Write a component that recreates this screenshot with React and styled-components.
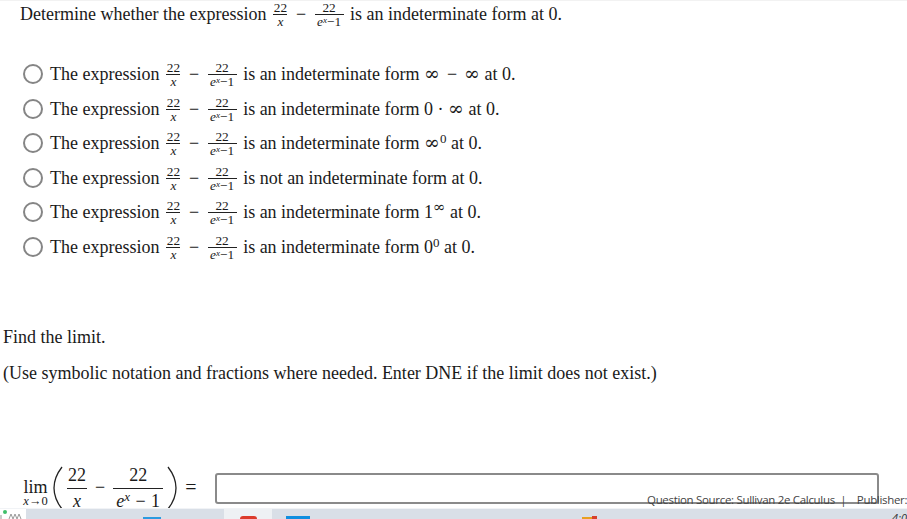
import styled, { createGlobalStyle } from "styled-components";

const GlobalStyle = createGlobalStyle`
  html, body {
    margin: 0;
    padding: 0;
    background: #fff;
  }
`;

const Page = styled.div`
  position: relative;
  box-sizing: border-box;
  width: 907px;
  height: 519px;
  overflow: hidden;
  display: flex;
  flex-direction: column;
  background: #fff;
  border-top: 1px solid #f2f2f2;
  color: #1a1a1a;
  font-family: "Liberation Serif", "Times New Roman", serif;
  font-size: 18px;
`;

const Question = styled.div`
  display: flex;
  align-items: center;
  height: 27px;
  padding-left: 20px;
  white-space: pre;
`;

const Options = styled.div`
  display: flex;
  flex-direction: column;
  margin-top: 29px;
  padding-left: 23px;
`;

const Option = styled.label`
  display: flex;
  align-items: center;
  height: 34px;
  white-space: pre;
  &:nth-child(even) {
    margin-top: 1px;
  }
`;

const Tail = styled.span`
  display: block;
  white-space: pre;
`;

const Radio = styled.span`
  box-sizing: border-box;
  flex: none;
  width: 20px;
  height: 20px;
  margin-right: 7px;
  border: 2px solid #858585;
  border-radius: 50%;
  background: #fff;
`;

const Frac = styled.span`
  display: inline-flex;
  flex-direction: column;
  align-items: center;
  width: ${(p) => p.$w}px;
  font-size: 13.3px;
  line-height: 13px;
`;

const Num = styled.span`
  display: block;
`;

const Den = styled.span`
  display: block;
  align-self: stretch;
  text-align: center;
  border-top: 1px solid #222;
  font-style: italic;
`;

const DenUpright = styled.span`
  font-style: normal;
`;

const Minus = styled.span`
  margin: 0 ${(p) => p.$gap || 8.5}px;
`;

const Expr = styled.span`
  display: inline-flex;
  align-items: center;
  margin: 0 ${(p) => p.$after}px 0 7px;
`;

const Sup = styled.sup`
  font-size: ${(p) => p.$size || 13}px;
  line-height: 0;
  vertical-align: ${(p) => p.$raise || 6}px;
`;

const Inf = styled.span`
  font-family: "DejaVu Serif", serif;
  font-size: ${(p) => p.$size || 19}px;
  line-height: 0;
`;

const Prose = styled.p`
  margin: 0;
  padding-left: 3px;
  line-height: 20px;
`;

const FindLimit = styled(Prose)`
  margin-top: 63px;
`;

const UseNotation = styled(Prose)`
  margin-top: 16px;
`;

const LimitRow = styled.div`
  display: flex;
  align-items: center;
  height: 45px;
  margin-top: 82px;
  padding-left: 23px;
`;

const LimBlock = styled.span`
  flex: none;
  width: 25px;
  display: inline-flex;
  flex-direction: column;
  align-items: center;
  line-height: 16px;
  padding-top: 11px;
`;

const LimSub = styled.span`
  font-size: 12.5px;
  line-height: 13px;
  white-space: nowrap;
`;

const Italic = styled.i`
  font-style: italic;
`;

const Paren = styled.svg`
  flex: none;
  width: 12px;
  height: 44px;
  margin: ${(p) => p.$margin};
`;

const BigFrac = styled.span`
  flex: none;
  display: inline-flex;
  flex-direction: column;
  align-items: center;
  width: ${(p) => p.$w}px;
  line-height: 25px;
  padding-top: 2px;
  word-spacing: 1px;
`;

const Equals = styled.span`
  flex: none;
  font-size: 20px;
  margin: 0 19px 0 7px;
`;

const AnswerBox = styled.input`
  flex: none;
  box-sizing: border-box;
  width: 664px;
  height: 31px;
  margin-top: 2px;
  border: 2px solid #8a8a8a;
  border-radius: 3px;
  background: #fff;
`;

const SourceLine = styled.div`
  position: absolute;
  left: 647px;
  top: 491px;
  font-family: "Open Sans", sans-serif;
  font-size: 11.5px;
  letter-spacing: -0.32px;
  line-height: 16px;
  color: #444;
  white-space: pre;
`;

const Taskbar = styled.div`
  position: absolute;
  left: 0;
  right: 0;
  bottom: 0;
  height: 11px;
  display: flex;
  background: #d9dfe7;
  border-top: 1px solid #f1f3f6;
  box-sizing: border-box;
`;

const StartTile = styled.svg`
  flex: none;
  width: 26px;
  height: 10px;
  background: #fff;
`;

const Marker = styled.span`
  flex: none;
  align-self: flex-end;
  height: ${(p) => p.$h}px;
  width: ${(p) => p.$w}px;
  margin-left: ${(p) => p.$left}px;
  background: ${(p) => p.$color};
`;

const Tile = styled.span`
  flex: none;
  display: flex;
  justify-content: center;
  align-items: flex-end;
  width: 48px;
  height: 10px;
  margin-left: 63px;
  background: #eef1f4;
`;

const RedArc = styled.span`
  width: 17px;
  height: 3px;
  border-radius: 9px 9px 0 0;
  background: #dc3b2c;
`;

const Clock = styled.span`
  position: absolute;
  right: 0;
  top: 0;
  font-family: "Open Sans", sans-serif;
  font-size: 11px;
  font-style: italic;
  line-height: 18px;
  color: #333;
`;

const Fractions = ({ after }) => (
  <Expr $after={after}>
    <Frac $w={14}>
      <Num>22</Num>
      <Den>x</Den>
    </Frac>
    <Minus>&minus;</Minus>
    <Frac $w={29}>
      <Num>22</Num>
      <Den>
        e<Sup $size={9} $raise={3}>x</Sup>
        <DenUpright>&minus;1</DenUpright>
      </Den>
    </Frac>
  </Expr>
);

const options = [
  <>
    is an indeterminate form <Inf>&infin;</Inf>
    <Minus $gap={7}>&minus;</Minus>
    <Inf>&infin;</Inf> at 0.
  </>,
  <>
    is an indeterminate form 0 &middot; <Inf>&infin;</Inf> at 0.
  </>,
  <>
    is an indeterminate form <Inf>&infin;</Inf>
    <Sup>0</Sup> at 0.
  </>,
  <>is not an indeterminate form at 0.</>,
  <>
    is an indeterminate form 1<Sup><Inf $size={15}>&infin;</Inf></Sup> at 0.
  </>,
  <>
    is an indeterminate form 0<Sup>0</Sup> at 0.
  </>,
];

export default function App() {
  return (
    <>
      <GlobalStyle />
      <Page>
        <Question>
          Determine whether the expression
          <Fractions after={2} />
          <Tail> is an indeterminate form at 0.</Tail>
        </Question>
        <Options>
          {options.map((tail, i) => (
            <Option key={i}>
              <Radio />
              The expression
              <Fractions after={2} />
              <Tail> {tail}</Tail>
            </Option>
          ))}
        </Options>
        <FindLimit>Find the limit.</FindLimit>
        <UseNotation>
          (Use symbolic notation and fractions where needed. Enter DNE if the limit does not exist.)
        </UseNotation>
        <LimitRow>
          <LimBlock>
            lim
            <LimSub>
              <Italic>x</Italic>&rarr;0
            </LimSub>
          </LimBlock>
          <Paren viewBox="0 0 12 44" $margin="0 3px 0 4px">
            <path d="M10 1C3 10 2 18 2 22s1 12 8 21" fill="none" stroke="#222" strokeWidth="1.3" />
          </Paren>
          <BigFrac $w={20}>
            <Num>22</Num>
            <Den>x</Den>
          </BigFrac>
          <Minus $gap={8}>&minus;</Minus>
          <BigFrac $w={50}>
            <Num>22</Num>
            <Den>
              e<Sup $size={13} $raise={6}>x</Sup>
              <DenUpright> &minus; 1</DenUpright>
            </Den>
          </BigFrac>
          <Paren viewBox="0 0 12 44" $margin="0 0 0 3px">
            <path d="M2 1c7 9 8 17 8 21s-1 12-8 21" fill="none" stroke="#222" strokeWidth="1.3" />
          </Paren>
          <Equals>=</Equals>
          <AnswerBox aria-label="answer" />
        </LimitRow>
        <SourceLine>Question Source: Sullivan 2e Calculus  |    Publisher:</SourceLine>
        <Taskbar>
          <StartTile viewBox="0 0 26 10">
            <circle cx="5" cy="3" r="2" fill="#3fbf6a" />
            <path d="M1 6v4M9 10l2-5 2 5 2-5 2 5 2-5 2 5" fill="none" stroke="#999" strokeWidth="1" />
          </StartTile>
          <Marker $left={117} $w={18} $h={2} $color="#2b9be0" />
          <Tile>
            <RedArc />
          </Tile>
          <Marker $left={14} $w={24} $h={3} $color="#0f8fe0" />
          <Marker $left={272} $w={10} $h={2} $color="#e8a020" />
          <Marker $left={0} $w={5} $h={3} $color="#d8402c" />
          <Clock>4:0</Clock>
        </Taskbar>
      </Page>
    </>
  );
}
